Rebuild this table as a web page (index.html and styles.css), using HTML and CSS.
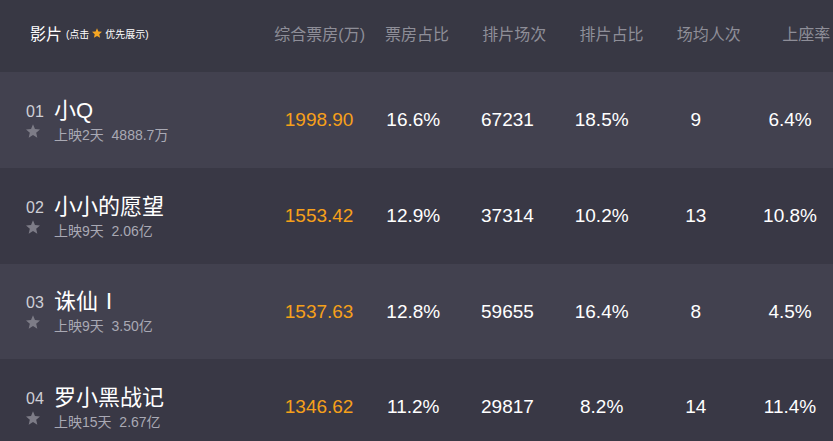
FILE: index.html
```html
<!DOCTYPE html>
<html lang="zh">
<head>
<meta charset="utf-8">
<title>票房</title>
<link rel="stylesheet" href="styles.css">
</head>
<body>
<div class="board">
  <div class="head">
    <div class="head-film"><span class="head-title">影片</span><span class="head-hint">(点击 <svg class="hint-star" viewBox="2 2 20 19"><path d="M12 17.27L18.18 21l-1.64-7.03L22 9.24l-7.19-.61L12 2 9.19 8.63 2 9.24l5.46 4.73L5.82 21z"/></svg> 优先展示)</span></div>
    <div class="head-col">综合票房(万)</div>
    <div class="head-col">票房占比</div>
    <div class="head-col">排片场次</div>
    <div class="head-col">排片占比</div>
    <div class="head-col">场均人次</div>
    <div class="head-col">上座率</div>
  </div>

  <div class="row row-light">
    <div class="film">
      <span class="rank">01</span><span class="name">小Q</span>
      <svg class="star" viewBox="2 2 20 19"><path d="M12 17.27L18.18 21l-1.64-7.03L22 9.24l-7.19-.61L12 2 9.19 8.63 2 9.24l5.46 4.73L5.820 21z"/></svg><span class="sub">上映2天&nbsp; 4888.7万</span>
    </div>
    <div class="cell gold">1998.90</div>
    <div class="cell">16.6%</div>
    <div class="cell">67231</div>
    <div class="cell">18.5%</div>
    <div class="cell">9</div>
    <div class="cell">6.4%</div>
  </div>

  <div class="row row-dark">
    <div class="film">
      <span class="rank">02</span><span class="name">小小的愿望</span>
      <svg class="star" viewBox="2 2 20 19"><path d="M12 17.27L18.18 21l-1.64-7.03L22 9.24l-7.19-.61L12 2 9.19 8.63 2 9.24l5.46 4.73L5.82 21z"/></svg><span class="sub">上映9天&nbsp; 2.06亿</span>
    </div>
    <div class="cell gold">1553.42</div>
    <div class="cell">12.9%</div>
    <div class="cell">37314</div>
    <div class="cell">10.2%</div>
    <div class="cell">13</div>
    <div class="cell">10.8%</div>
  </div>

  <div class="row row-light row-short">
    <div class="film">
      <span class="rank">03</span><span class="name">诛仙Ⅰ</span>
      <svg class="star" viewBox="2 2 20 19"><path d="M12 17.27L18.18 21l-1.64-7.03L22 9.24l-7.19-.61L12 2 9.19 8.63 2 9.24l5.46 4.73L5.82 21z"/></svg><span class="sub">上映9天&nbsp; 3.50亿</span>
    </div>
    <div class="cell gold">1537.63</div>
    <div class="cell">12.8%</div>
    <div class="cell">59655</div>
    <div class="cell">16.4%</div>
    <div class="cell">8</div>
    <div class="cell">4.5%</div>
  </div>

  <div class="row row-dark">
    <div class="film">
      <span class="rank">04</span><span class="name">罗小黑战记</span>
      <svg class="star" viewBox="2 2 20 19"><path d="M12 17.27L18.18 21l-1.64-7.03L22 9.24l-7.19-.61L12 2 9.19 8.63 2 9.24l5.46 4.73L5.82 21z"/></svg><span class="sub">上映15天&nbsp; 2.67亿</span>
    </div>
    <div class="cell gold">1346.62</div>
    <div class="cell">11.2%</div>
    <div class="cell">29817</div>
    <div class="cell">8.2%</div>
    <div class="cell">14</div>
    <div class="cell">11.4%</div>
  </div>
</div>
</body>
</html>
```

FILE: styles.css
```css
html, body {
  margin: 0;
  padding: 0;
  background: #393845;
  overflow: hidden;
}

.board {
  width: 833px;
  font-family: "Liberation Sans", "Noto Sans CJK SC", sans-serif;
  color: #fff;
}

.head {
  height: 72px;
  background: #383844;
  display: grid;
  grid-template-columns: 271px repeat(6, 97.3px);
  align-items: center;
  padding-bottom: 6px;
  box-sizing: border-box;
  white-space: nowrap;
}

.head-film {
  padding-left: 30px;
  display: flex;
  align-items: center;
}

.head-title {
  font-size: 16px;
  color: #fff;
}

.head-hint {
  font-size: 10px;
  color: #fff;
  margin-left: 4px;
  display: inline-flex;
  align-items: center;
}

.hint-star {
  width: 10px;
  height: 10px;
  fill: #f5a623;
  margin: 0 3px;
}

.head-col {
  font-size: 16px;
  color: #8e8e98;
  text-align: center;
}

.row {
  height: 96px;
  display: grid;
  grid-template-columns: 272px repeat(6, 94.2px);
  align-items: center;
  white-space: nowrap;
}

.row-short {
  height: 95px;
}

.row-light {
  background: #42414f;
}

.row-dark {
  background: #393845;
}

.film {
  padding-left: 26px;
  display: grid;
  grid-template-columns: 28px auto;
  align-items: center;
  margin-top: 1px;
}

.rank {
  font-size: 16px;
  color: #cfcfd6;
  line-height: 26px;
  padding-top: 2px;
}

.name {
  font-size: 22px;
  line-height: 26px;
  color: #fff;
}

.star {
  width: 14px;
  height: 14px;
  fill: #7d7c87;
  align-self: start;
  margin-top: -1px;
}

.sub {
  font-size: 14px;
  line-height: 20px;
  color: #a9a9b4;
}

.cell {
  text-align: center;
  font-size: 19px;
  color: #fff;
}

.gold {
  color: #f6a01a;
}
```
